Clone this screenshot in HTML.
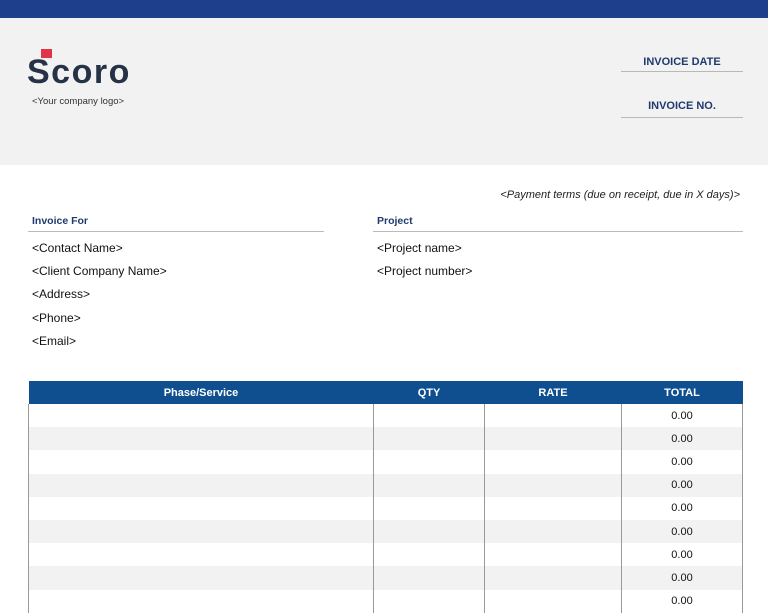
<!DOCTYPE html>
<html><head><style>
body{margin:0;width:768px;height:615px;overflow:hidden;background:#fff;font-family:"Liberation Sans",sans-serif;position:relative}
.a{position:absolute}
.bar{left:0;top:0;width:768px;height:18px;background:#1e3f8c}
.hd{left:0;top:18px;width:768px;height:147px;background:#f2f2f2}
.lbl{font-size:11px;font-weight:bold;color:#1e3a6e;text-align:center;width:122px;left:621px}
.ln{left:621px;width:122px;height:1px;background:#b8b8b8}
.t{font-size:12px;color:#111}
.sec{font-size:10.5px;font-weight:bold;color:#1e3a6e}
table{position:absolute;left:28px;top:381px;width:715px;border-collapse:collapse;font-size:11px}
th{background:#0f4f8f;color:#fff;height:23px;font-weight:bold;padding:0}
td{height:23.2px;padding:0;border-left:1px solid #999;border-right:1px solid #999;text-align:center;color:#111}
tr:nth-child(odd) td{background:#f2f2f2}
</style></head><body>
<div class="a bar"></div>
<div class="a hd"></div>
<div class="a" style="left:27px;top:52px;font-size:34px;font-weight:bold;color:#263246;letter-spacing:1.5px;line-height:40px">Scoro</div>
<div class="a" style="left:41px;top:49px;width:11px;height:9px;background:#e0344a"></div>
<div class="a" style="left:32px;top:96px;font-size:9.5px;color:#333">&lt;Your company logo&gt;</div>
<div class="a lbl" style="top:56px">INVOICE DATE</div>
<div class="a ln" style="top:71px"></div>
<div class="a lbl" style="top:100px">INVOICE NO.</div>
<div class="a ln" style="top:117px"></div>
<div class="a" style="right:28px;top:189px;font-size:11px;font-style:italic;color:#222">&lt;Payment terms (due on receipt, due in X days)&gt;</div>
<div class="a sec" style="left:32px;top:215px">Invoice For</div>
<div class="a" style="left:28px;top:231px;width:296px;height:1px;background:#bbb"></div>
<div class="a sec" style="left:377px;top:215px">Project</div>
<div class="a" style="left:373px;top:231px;width:370px;height:1px;background:#bbb"></div>
<div class="a t" style="left:32px;top:237px;line-height:23.2px">&lt;Contact Name&gt;<br>&lt;Client Company Name&gt;<br>&lt;Address&gt;<br>&lt;Phone&gt;<br>&lt;Email&gt;</div>
<div class="a t" style="left:377px;top:237px;line-height:23.2px">&lt;Project name&gt;<br>&lt;Project number&gt;</div>
<table>
<tr><th style="width:345px">Phase/Service</th><th style="width:111px">QTY</th><th style="width:137px">RATE</th><th>TOTAL</th></tr>
<tr><td></td><td></td><td></td><td>0.00</td></tr>
<tr><td></td><td></td><td></td><td>0.00</td></tr>
<tr><td></td><td></td><td></td><td>0.00</td></tr>
<tr><td></td><td></td><td></td><td>0.00</td></tr>
<tr><td></td><td></td><td></td><td>0.00</td></tr>
<tr><td></td><td></td><td></td><td>0.00</td></tr>
<tr><td></td><td></td><td></td><td>0.00</td></tr>
<tr><td></td><td></td><td></td><td>0.00</td></tr>
<tr><td></td><td></td><td></td><td>0.00</td></tr>
</table>
</body></html>
